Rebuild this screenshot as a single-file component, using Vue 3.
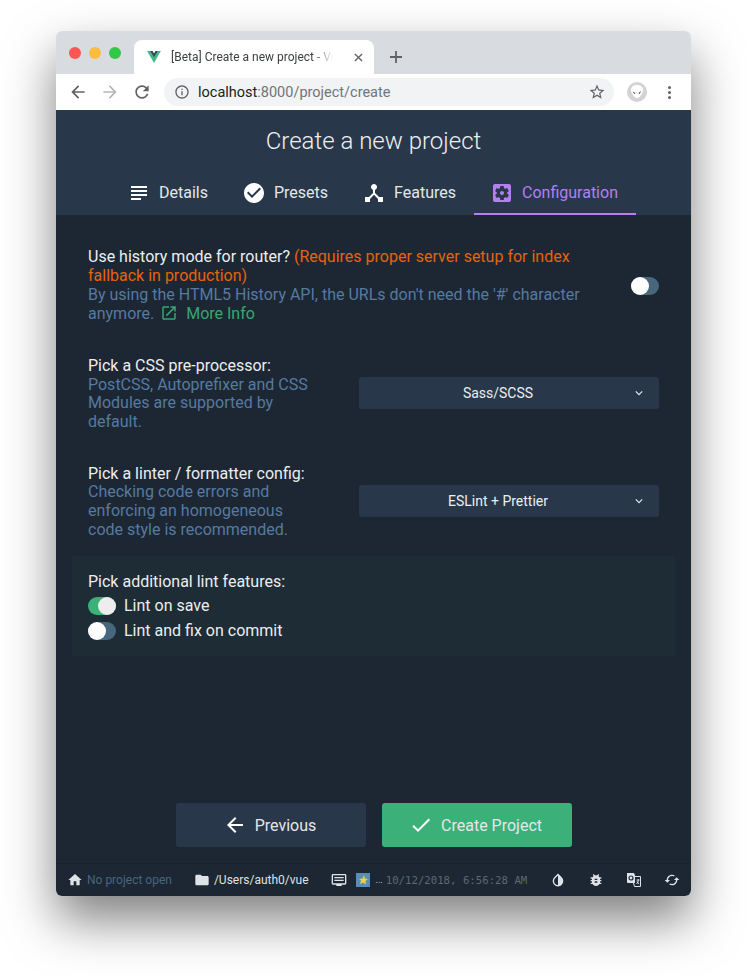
<script setup>
const tabs = [
  { label: "Details", path: "M14 17H4v2h10v-2zm6-8H4v2h16V9zM4 15h16v-2H4v2zM4 5v2h16V5H4z" },
  { label: "Presets", path: "M12 2C6.48 2 2 6.48 2 12s4.48 10 10 10 10-4.48 10-10S17.52 2 12 2zm-2 15l-5-5 1.41-1.41L10 14.17l7.59-7.59L19 8l-9 9z" },
  { label: "Features", path: "M17 16l-4-4V8.82C14.16 8.4 15 7.3 15 6c0-1.66-1.34-3-3-3S9 4.34 9 6c0 1.3.84 2.4 2 2.82V12l-4 4H3v5h5v-3.05l4-4.2 4 4.2V21h5v-5h-4z" },
  {
    label: "Configuration",
    active: true,
    path: "M12 10c-1.1 0-2 .9-2 2s.9 2 2 2 2-.9 2-2-.9-2-2-2zm7-7H5c-1.11 0-2 .9-2 2v14c0 1.1.89 2 2 2h14c1.11 0 2-.9 2-2V5c0-1.1-.89-2-2-2zm-1.75 9c0 .23-.02.46-.05.68l1.48 1.16c.13.11.17.3.08.45l-1.4 2.42c-.09.15-.27.21-.43.15l-1.74-.7c-.36.28-.76.51-1.18.69l-.26 1.85c-.03.17-.18.3-.35.3h-2.8c-.17 0-.32-.13-.35-.29l-.26-1.85c-.43-.18-.82-.41-1.18-.69l-1.74.7c-.16.06-.34 0-.43-.15l-1.4-2.42c-.09-.15-.05-.34.08-.45l1.48-1.16c-.03-.23-.05-.46-.05-.69 0-.23.02-.46.05-.68l-1.48-1.16c-.13-.11-.17-.3-.08-.45l1.4-2.42c.09-.15.27-.21.43-.15l1.74.7c.36-.28.76-.51 1.18-.69l.26-1.85c.03-.17.18-.3.35-.3h2.8c.17 0 .32.13.35.29l.26 1.85c.43.18.82.41 1.18.69l1.74-.7c.16-.06.34 0 .43.15l1.4 2.42c.09.15.05.34-.08.45l-1.48 1.16c.03.23.05.46.05.69z"
  }
];

const selects = [
  {
    title: "Pick a CSS pre-processor:",
    text: "PostCSS, Autoprefixer and CSS Modules are supported by default.",
    value: "Sass/SCSS"
  },
  {
    title: "Pick a linter / formatter config:",
    text: "Checking code errors and enforcing an homogeneous code style is recommended.",
    value: "ESLint + Prettier"
  }
];
</script>

<template>
  <div class="page">
    <div class="window">
      <div class="tabstrip">
        <div class="lights">
          <span class="light red"></span>
          <span class="light yellow"></span>
          <span class="light green"></span>
        </div>
        <div class="browser-tab">
          <svg class="favicon" viewBox="0 0 24 21">
            <path fill="#41b883" d="M0 0h5l7 12L19 0h5L12 21z" />
            <path fill="#35495e" d="M5 0h4.5L12 4.5 14.5 0H19l-7 12z" />
          </svg>
          <span class="browser-tab-title">[Beta] Create a new project - Vue CLI</span>
          <svg class="tab-close" viewBox="0 0 10 10">
            <path d="M1 1l8 8M9 1l-8 8" />
          </svg>
        </div>
        <svg class="new-tab" viewBox="0 0 12 12">
          <path d="M6 0v12M0 6h12" />
        </svg>
      </div>

      <div class="toolbar">
        <svg class="nav-icon" viewBox="0 0 24 24"><path fill="#5f6368" d="M20 11H7.83l5.59-5.59L12 4l-8 8 8 8 1.41-1.41L7.83 13H20v-2z" /></svg>
        <svg class="nav-icon" viewBox="0 0 24 24"><path fill="#b4b6ba" d="M4 11h12.17l-5.59-5.59L12 4l8 8-8 8-1.41-1.41L16.17 13H4v-2z" /></svg>
        <svg class="nav-icon" viewBox="0 0 24 24"><path fill="#5f6368" d="M17.65 6.35C16.2 4.9 14.21 4 12 4c-4.42 0-7.99 3.58-7.99 8s3.57 8 7.99 8c3.73 0 6.84-2.55 7.73-6h-2.08c-.82 2.33-3.04 4-5.65 4-3.31 0-6-2.69-6-6s2.69-6 6-6c1.66 0 3.14.69 4.22 1.78L13 11h7V4l-2.35 2.35z" /></svg>
        <div class="omnibox">
          <svg class="info-icon" viewBox="0 0 24 24"><path fill="#5f6368" d="M11 7h2v2h-2zm0 4h2v6h-2zm1-9C6.48 2 2 6.48 2 12s4.48 10 10 10 10-4.48 10-10S17.52 2 12 2zm0 18c-4.41 0-8-3.59-8-8s3.59-8 8-8 8 3.59 8 8-3.59 8-8 8z" /></svg>
          <span class="url"><b>localhost</b>:8000/project/create</span>
          <svg class="star" viewBox="0 0 24 24"><path fill="#5f6368" d="M22 9.24l-7.19-.62L12 2 9.19 8.63 2 9.24l5.46 4.73L5.82 21 12 17.27 18.18 21l-1.63-7.03L22 9.24zM12 15.4l-3.76 2.27 1-4.28-3.32-2.88 4.38-.38L12 6.1l1.71 4.04 4.38.38-3.32 2.88 1 4.28L12 15.4z" /></svg>
        </div>
        <div class="avatar">
          <svg viewBox="0 0 20 20">
            <path fill="#fff" d="M10 3c4 0 6 2.300 6 5 0 3.500-3.500 8-6 8s-6-4.500-6-8c0-2.700 2-5 6-5z" />
            <path fill="#333" d="M5.500 9.500l3 1.500-.8 1zM14.500 9l-3 2 .8 1z" />
          </svg>
        </div>
        <div class="menu-dots"><i></i><i></i><i></i></div>
      </div>

      <div class="app-header">
        <h1 class="title">Create a new project</h1>
        <div class="tabs">
          <div v-for="tab in tabs" :key="tab.label" class="tab" :class="{ active: tab.active }">
            <svg class="tab-icon" viewBox="0 0 24 24"><path :d="tab.path" /></svg>
            <span>{{ tab.label }}</span>
          </div>
        </div>
      </div>

      <div class="content">
        <div class="prompts">
          <div class="prompt">
            <div class="prompt-left wide">
              <div class="prompt-title">
                Use history mode for router?
                <span class="warning">(Requires proper server setup for index fallback in production)</span>
              </div>
              <div class="prompt-text">
                By using the HTML5 History API, the URLs don't need the '#' character anymore.
                <span class="more-info">
                  <svg class="link-icon" viewBox="0 0 24 24"><path d="M19 19H5V5h7V3H5c-1.11 0-2 .9-2 2v14c0 1.100.89 2 2 2h14c1.100 0 2-.9 2-2v-7h-2v7zM14 3v2h3.590l-9.830 9.830 1.410 1.410L19 6.410V10h2V3h-7z" /></svg>
                  More Info
                </span>
              </div>
            </div>
            <div class="switch off"><span class="knob"></span></div>
          </div>

          <div v-for="item in selects" :key="item.title" class="prompt">
            <div class="prompt-left">
              <div class="prompt-title">{{ item.title }}</div>
              <div class="prompt-text">{{ item.text }}</div>
            </div>
            <div class="select">
              <span>{{ item.value }}</span>
              <svg class="chevron" viewBox="0 0 10 6"><path d="M1 1l4 4 4-4" /></svg>
            </div>
          </div>

          <div class="group">
            <div class="prompt-title">Pick additional lint features:</div>
            <div class="check-row first">
              <div class="switch on"><span class="knob"></span></div>
              <span>Lint on save</span>
            </div>
            <div class="check-row">
              <div class="switch off"><span class="knob"></span></div>
              <span>Lint and fix on commit</span>
            </div>
          </div>
        </div>

        <div class="actions">
          <button class="btn">
            <svg class="btn-icon" viewBox="0 0 24 24"><path d="M20 11H7.830l5.590-5.590L12 4l-8 8 8 8 1.410-1.410L7.830 13H20v-2z" /></svg>
            Previous
          </button>
          <button class="btn primary">
            <svg class="btn-icon" viewBox="0 0 24 24"><path d="M9 16.170L4.830 12l-1.420 1.410L9 19 21 7l-1.410-1.410z" /></svg>
            Create Project
          </button>
        </div>
      </div>

      <div class="statusbar">
        <div class="status-item">
          <svg class="status-icon" viewBox="0 0 24 24"><path d="M10 20v-6h4v6h5v-8h3L12 3 2 12h3v8z" /></svg>
          <span class="muted">No project open</span>
        </div>
        <div class="status-item">
          <svg class="status-icon" viewBox="0 0 24 24"><path d="M10 4H4c-1.100 0-1.990.9-1.990 2L2 18c0 1.100.9 2 2 2h16c1.100 0 2-.9 2-2V8c0-1.100-.9-2-2-2h-8l-2-2z" /></svg>
          <span>/Users/auth0/vue</span>
        </div>
        <div class="status-item log">
          <svg class="status-icon" viewBox="0 0 24 24"><path d="M21 3H3c-1.100 0-2 .9-2 2v12c0 1.100.9 2 2 2h5v2h8v-2h5c1.100 0 2-.9 2-2V5c0-1.100-.9-2-2-2zm0 14H3V5h18v12zM5 7.500h14v2H5zm0 4h14v2H5z" /></svg>
          <svg class="log-type" viewBox="0 0 14 14">
            <rect width="14" height="14" fill="#5a8db5" />
            <path fill="#e8d24a" d="M8 2l1 3.500 3 .5-2.500 2 .5 3.500L7 9.500 4 11l1-3.500L3 6l3.500-.5z" />
          </svg>
          <span class="dots">...</span>
          <span class="date">10/12/2018, 6:56:28 AM</span>
        </div>
        <div class="status-action">
          <svg class="status-icon" viewBox="0 0 24 24"><path d="M17.660 7.930L12 2.270 6.340 7.930c-3.120 3.120-3.120 8.190 0 11.310C7.900 20.800 9.950 21.580 12 21.580c2.050 0 4.100-.78 5.660-2.340 3.120-3.120 3.120-8.190 0-11.310zM12 19.590c-1.600 0-3.110-.62-4.240-1.760C6.620 16.690 6 15.190 6 13.590s.62-3.110 1.760-4.240L12 5.100v14.490z" /></svg>
        </div>
        <div class="status-action">
          <svg class="status-icon" viewBox="0 0 24 24"><path d="M20 8h-2.810c-.45-.78-1.070-1.450-1.820-1.960L17 4.410 15.590 3l-2.170 2.170C12.960 5.060 12.490 5 12 5c-.49 0-.96.06-1.410.17L8.410 3 7 4.410l1.620 1.630C7.880 6.550 7.260 7.220 6.810 8H4v2h2.090c-.05.33-.09.66-.09 1v1H4v2h2v1c0 .34.04.67.09 1H4v2h2.810c1.040 1.790 2.970 3 5.190 3s4.150-1.210 5.190-3H20v-2h-2.090c.05-.33.09-.66.09-1v-1h2v-2h-2v-1c0-.34-.04-.67-.09-1H20V8zm-6 8h-4v-2h4v2zm0-4h-4v-2h4v2z" /></svg>
        </div>
        <div class="status-action">
          <svg class="status-icon" viewBox="0 0 16 16">
            <path fill="#dfe2e6" d="M1 1h7l1 2.500V11H2a1 1 0 0 1-1-1z" />
            <path fill="none" stroke="#dfe2e6" d="M8.500 4.500h6v10h-6L7.500 11" />
            <circle cx="5" cy="6" r="2" fill="none" stroke="#1c2733" stroke-width="1.200" />
            <path fill="none" stroke="#dfe2e6" d="M10.500 8h3M12.500 7.500c-.2 2-1 3.500-2 4.500M11 9.500c.5 1 1.200 1.800 2.200 2.400" />
          </svg>
        </div>
        <div class="status-action">
          <svg class="status-icon" viewBox="0 0 24 24"><path d="M12 4V1L8 5l4 4V6c3.310 0 6 2.690 6 6 0 1.010-.25 1.970-.7 2.800l1.460 1.460C19.540 15.030 20 13.570 20 12c0-4.420-3.580-8-8-8zm0 14c-3.310 0-6-2.690-6-6 0-1.010.25-1.970.7-2.800L5.240 7.740C4.460 8.970 4 10.430 4 12c0 4.420 3.580 8 8 8v3l4-4-4-4v3z" transform="rotate(90 12 12)" /></svg>
        </div>
      </div>
    </div>
  </div>
</template>

<style>
html,
body {
  margin: 0;
  background: #fff;
}
</style>

<style scoped>
.page {
  width: 747px;
  height: 977px;
  box-sizing: border-box;
  padding: 31px 56px 81px;
  overflow: hidden;
  background: #fff;
  font-family: Roboto, "Liberation Sans", sans-serif;
}
.window {
  height: 100%;
  display: flex;
  flex-direction: column;
  border-radius: 6px;
  overflow: hidden;
  box-shadow: 0 24px 50px 0 rgba(0, 0, 0, 0.5);
}

/* browser chrome */
.tabstrip {
  height: 43px;
  flex-shrink: 0;
  display: flex;
  align-items: flex-end;
  background: #d8dbe0;
}
.lights {
  display: flex;
  gap: 8px;
  width: 78px;
  box-sizing: border-box;
  padding: 0 0 15px 13px;
}
.light {
  width: 12px;
  height: 12px;
  border-radius: 50%;
}
.red { background: #fc5753; }
.yellow { background: #fdbc40; }
.green { background: #33c748; }
.browser-tab {
  width: 240px;
  height: 34px;
  box-sizing: border-box;
  padding: 0 10px 0 13px;
  display: flex;
  align-items: center;
  background: #fff;
  border-radius: 8px 8px 0 0;
}
.favicon {
  width: 14px;
  height: 12px;
  flex-shrink: 0;
}
.browser-tab-title {
  width: 162px;
  margin-left: 10px;
  font-size: 12px;
  color: #3c4043;
  white-space: nowrap;
  overflow: hidden;
  -webkit-mask-image: linear-gradient(90deg, #000 88%, transparent);
  mask-image: linear-gradient(90deg, #000 88%, transparent);
}
.tab-close {
  width: 9px;
  height: 9px;
  margin-left: 21px;
  fill: none;
  stroke: #5f6368;
  stroke-width: 1.5;
}
.new-tab {
  width: 12px;
  height: 12px;
  margin: 0 0 11px 16px;
  fill: none;
  stroke: #5f6368;
  stroke-width: 1.800;
}
.toolbar {
  height: 36px;
  flex-shrink: 0;
  display: flex;
  align-items: center;
  padding: 0 0 0 12px;
  background: #fff;
  box-sizing: border-box;
}
.nav-icon {
  width: 20px;
  height: 20px;
  margin-right: 12px;
}
.omnibox {
  width: 450px;
  height: 28px;
  padding: 0 8px 0 10px;
  box-sizing: border-box;
  display: flex;
  align-items: center;
  border-radius: 14px;
  background: #f1f3f4;
}
.info-icon {
  width: 16px;
  height: 16px;
}
.url {
  flex: 1;
  margin-left: 8px;
  font-size: 14.500px;
  color: #70757a;
}
.url b {
  font-weight: 400;
  color: #202124;
}
.star {
  width: 18px;
  height: 18px;
}
.avatar {
  width: 20px;
  height: 20px;
  margin-left: 13px;
  border-radius: 50%;
  background: #d3d3d3;
}
.avatar svg {
  display: block;
}
.menu-dots {
  display: flex;
  flex-direction: column;
  gap: 2px;
  margin-left: 21px;
}
.menu-dots i {
  width: 3px;
  height: 3px;
  border-radius: 50%;
  background: #5f6368;
}

/* app header */
.app-header {
  height: 105px;
  flex-shrink: 0;
  box-sizing: border-box;
  padding-top: 16px;
  display: flex;
  flex-direction: column;
  align-items: center;
  background: #28384a;
}
.title {
  margin: 0;
  height: 30px;
  font-size: 24px;
  line-height: 30px;
  font-weight: 300;
  color: #eef0f2;
}
.tabs {
  margin-top: auto;
  display: flex;
}
.tab {
  height: 44px;
  box-sizing: border-box;
  padding: 1px 18px 0 16px;
  display: flex;
  align-items: center;
  gap: 8px;
  border-bottom: 2px solid transparent;
  font-size: 16px;
  color: #e4e7ea;
}
.tab-icon {
  width: 24px;
  height: 24px;
  fill: #fff;
}
.tab.active {
  color: #b47ff0;
  border-bottom-color: #b47ff0;
}
.tab.active .tab-icon {
  fill: #b47ff0;
}

/* content */
.content {
  flex: 1;
  display: flex;
  flex-direction: column;
  background: #1c2733;
  font-size: 16px;
  line-height: 18.750px;
  color: #eceef0;
}
.prompts {
  flex: 1;
  padding: 17px 16px 0;
}
.prompt {
  display: flex;
  align-items: center;
  justify-content: space-between;
  padding: 16px;
  margin-bottom: 0.750px;
}
.prompt-left {
  width: 225px;
}
.prompt-left.wide {
  width: 500px;
}
.warning {
  color: #e5640c;
}
.prompt-text {
  color: #567aa0;
}
.more-info {
  margin-left: 2px;
  color: #37a86f;
}
.link-icon {
  width: 18px;
  height: 18px;
  margin-right: 4px;
  vertical-align: -3px;
  fill: #37a86f;
}
.select {
  position: relative;
  width: 300px;
  height: 32px;
  margin-bottom: 2px;
  box-sizing: border-box;
  padding-right: 22px;
  display: flex;
  align-items: center;
  justify-content: center;
  border-radius: 3px;
  background: #28384a;
  font-size: 14px;
}
.chevron {
  position: absolute;
  right: 16px;
  top: 13px;
  width: 8px;
  height: 6px;
  fill: none;
  stroke: #e4e7ea;
  stroke-width: 1.500;
}
.group {
  margin-top: -0.750px;
  padding: 17.750px 16px 12.500px;
  background: #1e2c35;
}
.check-row {
  height: 25px;
  display: flex;
  align-items: center;
  gap: 8px;
}
.check-row.first {
  margin-top: 1.500px;
}
.switch {
  position: relative;
  width: 28px;
  height: 18px;
  flex-shrink: 0;
  border-radius: 9px;
}
.switch.off {
  background: #48667c;
}
.switch.on {
  background: #3bb078;
}
.knob {
  position: absolute;
  top: 0;
  width: 18px;
  height: 18px;
  border-radius: 50%;
  background: #fff;
}
.switch.off .knob {
  left: 0;
}
.switch.on .knob {
  right: 0;
  background: #ededed;
}

/* buttons */
.actions {
  display: flex;
  justify-content: center;
  gap: 16px;
  padding: 16px;
}
.btn {
  width: 190px;
  height: 44px;
  padding: 0 2px 0 0;
  display: flex;
  align-items: center;
  justify-content: center;
  gap: 8px;
  border: none;
  border-radius: 3px;
  background: #28384a;
  font-family: inherit;
  font-size: 16px;
  color: #e4e7ea;
}
.btn.primary {
  background: #3bb078;
}
.btn-icon {
  width: 24px;
  height: 24px;
  fill: #fff;
}

/* status bar */
.statusbar {
  height: 33px;
  flex-shrink: 0;
  box-sizing: border-box;
  display: flex;
  align-items: center;
  background: #1c2733;
  border-top: 1px solid #19232e;
  font-size: 12px;
  color: #dfe2e6;
}
.status-item {
  display: flex;
  align-items: center;
  gap: 4px;
  padding: 0 11px;
}
.status-icon {
  width: 16px;
  height: 16px;
  fill: #dfe2e6;
}
.muted {
  color: #48667c;
}
.log {
  flex: 1;
  padding-right: 0;
}
.log-type {
  width: 14px;
  height: 14px;
  margin-left: 5px;
}
.dots {
  margin-left: 2px;
  font-size: 9px;
  line-height: 12px;
}
.date {
  margin-left: -1px;
  font-family: "DejaVu Sans Mono", "Liberation Mono", monospace;
  font-size: 10.700px;
  color: #5b6975;
}
.status-action {
  width: 38px;
  display: flex;
  justify-content: center;
}
</style>
